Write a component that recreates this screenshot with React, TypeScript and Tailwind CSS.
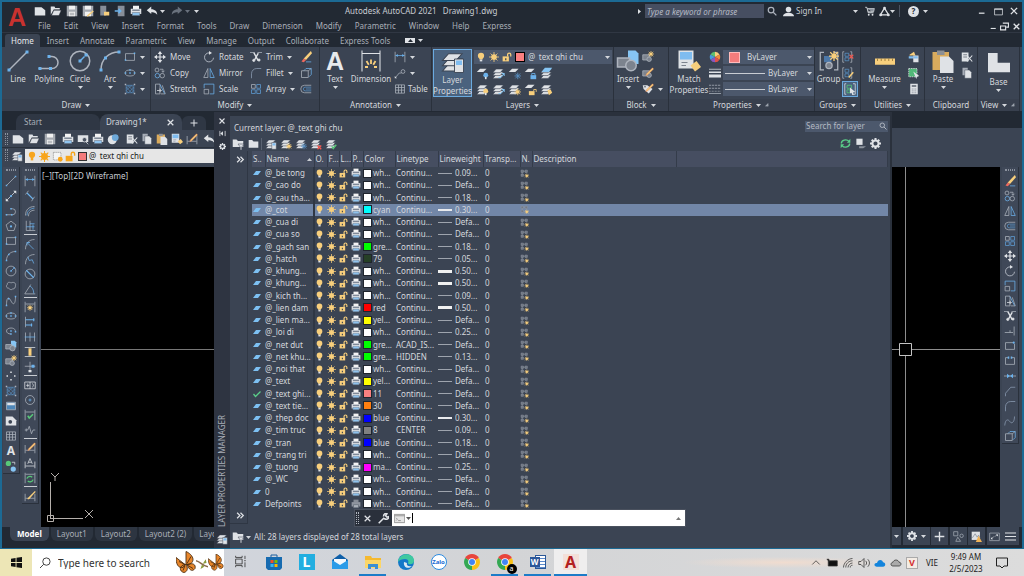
import type { ReactNode } from "react";

const G = "#aeb4be";
const L = "#dfe2e6";
const B = "#6cb2ec";
const Y = "#f8cf7c";

const stack = (
  <g fill={L} stroke="#3b4453" strokeWidth="0.7">
    <path d="M5 9.5h9l-4 4.5H1z" />
    <path d="M5 6h9l-4 4.5H1z" />
    <path d="M5 2.500h9L10 7H1z" />
  </g>
);
const sheet = <path d="M5 2h8L9 6H1z" fill={L} />;
const blockBase = (
  <g fill="#7c838e" stroke={G}>
    <path d="M1 5h9v7H1z" />
    <circle cx="9.500" cy="11" r="3" />
  </g>
);
const spark = (x: number, y: number) => (
  <g transform={`translate(${x} ${y})`}>
    <path d="M0-4v8M-4 0h8M-3-3l6 6M3-3l-6 6" stroke={Y} strokeWidth="1" />
    <circle r="2" fill={Y} />
  </g>
);
const pencil = <path d="M14 1l1.500 1.500-8 8-2.500 1 1-2.500z" fill={Y} stroke="#e07050" strokeWidth="0.5" />;

const icons: Record<string, ReactNode> = {
  line: <><path d="M2 14L14 2" stroke={G} /><path d="M1 13h2v2H1zM13 1h2v2h-2z" fill={B} /></>,
  xline: <><path d="M2 14L14 2" stroke={L} /><path d="M1 11v4h4zM15 5V1h-4z" fill={L} /><circle cx="8" cy="8" r="1.500" fill={B} /></>,
  polyline: <><path d="M1 13h9a4 4 0 000-8H8" stroke={G} /><path d="M1 12h2v2H1zM8 12h2v2H8zM7 4h2v2H7z" fill={B} /></>,
  circle: <><circle cx="8" cy="8" r="6.500" stroke={G} /><path d="M8 8l3-3" stroke={B} /><path d="M7 7h2v2H7zM11 3h2v2h-2z" fill={B} /></>,
  arc: <><path d="M2 14C2 7 7 2 14 2" stroke={G} /><path d="M1 13h2v2H1zM13 1h2v2h-2zM4 5h2v2H4z" fill={B} /></>,
  rect: <><path d="M2 3.500h12v9H2z" stroke={G} /><path d="M1 11h2v2H1zM13 2h2v2h-2z" fill={B} /></>,
  ellipse: <><ellipse cx="8" cy="8" rx="6.500" ry="4" stroke={G} /><path d="M1 7h2v2H1zM13 7h2v2h-2zM7 3h2v2H7zM7 7h2v2H7z" fill={B} /></>,
  ellipseArc: <><path d="M8 12c-8 0-8-8 0-8 5 0 6 3 6 5" stroke={G} /><path d="M7 7h2v2H7zM7 11h2v2H7zM13 8h2v2h-2z" fill={B} /></>,
  hatch: <><path d="M3 3h10v10H3zM3 6l7 7M3 10l3 3M5 3l8 8M9 3l4 4M13 6l-7 7M13 10l-3 3M10 3L3 10M7 3L3 7" stroke="#5a94c8" strokeWidth="0.8" /><path d="M1 1h2v2H1zM13 1h2v2h-2zM1 13h2v2H1zM13 13h2v2h-2z" fill={G} /></>,
  gradient: <><path d="M2 3h12v10H2z" fill="#4d86b8" stroke={G} /><path d="M3 4h10v3H3z" fill={L} /></>,
  polygon: <><path d="M8 1.500L14.500 6.500 12 14H4L1.500 6.500z" stroke={G} /><circle cx="8" cy="8.500" r="1.500" fill={B} /></>,
  revcloud: <path d="M3 6c0-4 4-3 5-2 3-2 7 0 6 3 0 3-1 5-4 5-2 2-4 0-5-1C2 11 1 8 3 6z" stroke={G} />,
  spline: <><path d="M2 14C2 2 5 2 8 8s6 5 6-6" stroke={G} /><path d="M1 13h2v2H1zM13 1h2v2h-2zM4 4h2v2H4z" fill={B} /></>,
  insert: <><path d="M8 1h5l2 2v7H8z" fill="#86c5f4" /><path d="M1 6h8v6H1z" fill="#7c838e" stroke={G} /><circle cx="10" cy="11" r="3.500" fill="#7c838e" stroke={G} /></>,
  makeBlock: <>{blockBase}{spark(12, 4)}</>,
  editBlock: <>{blockBase}{pencil}</>,
  tag: <><path d="M1 3h6l7 5-5 6-7-6z" fill={L} /><circle cx="4" cy="5" r="1" fill="#3b4453" />{pencil}</>,
  point: <path d="M7 2h2v2H7zM2 7h2v2H2zM12 7h2v2h-2zM7 12h2v2H7z" fill={L} />,
  region: <><path d="M1 2h9l5 5v7H1z" fill={L} /><circle cx="7" cy="9" r="2.500" fill="#3b4453" /></>,
  table: <path d="M2 2.500h12v11H2zM2 6h12M2 9.500h12M6 2.500v11M10 2.500v11" stroke={G} />,
  addSel: <><circle cx="4.500" cy="4.500" r="3.500" fill="#58c878" /><circle cx="11" cy="12" r="3.500" fill="#86c5f4" /><path d="M9 3h4v3" stroke={L} /></>,
  move: <><path d="M8 2v12M2 8h12" stroke={L} strokeWidth="1.600" /><path d="M8 0l3 4H5zM8 16l3-4H5zM0 8l4-3v6zM16 8l-4-3v6z" fill={L} /></>,
  copy: <><circle cx="4" cy="4" r="2.600" stroke={G} /><circle cx="4.500" cy="11.500" r="3" stroke={B} /><circle cx="11" cy="11.500" r="3" stroke={G} /><path d="M8 3h4v4M10 5l2 2 2-2" stroke={G} /></>,
  stretch: <><path d="M2 1.500h6v13H2zM11 3l4 11.500H9" stroke={G} /><path d="M8 2l6 12" stroke={B} /><path d="M4 10h5M7 8l3 2-3 2" stroke={L} /></>,
  rotate: <><path d="M14 9A6 6 0 118 2.500" stroke={G} strokeWidth="1.300" /><path d="M8 0l4 2.500L8 5z" fill={L} /></>,
  mirror: <><path d="M6.500 2v12H1z" stroke={G} /><path d="M9.500 2v12H15z" stroke={B} /></>,
  scale: <><path d="M1.500 7V1.500h13v13H9" stroke={B} /><path d="M1.500 8.500h6v6h-6z" stroke={G} /></>,
  trim: <><path d="M5 2l6 11M11 3L6 12" stroke={L} strokeWidth="2" /><path d="M0 2h6M10 2h6" stroke={G} /><circle cx="5" cy="12.500" r="1.500" fill={L} stroke={L} /><circle cx="12" cy="12" r="1.500" fill={L} stroke={L} /></>,
  fillet: <path d="M2 15V9c0-4 3-7 7-7h6" stroke="#8d9db4" />,
  chamfer: <path d="M2 15v-4l7-8h6" stroke="#8d9db4" />,
  blend: <path d="M1 14c1-10 5-8 7-5s6 1 6-7" stroke="#8d9db4" />,
  array: <><path d="M2 2h5v5H2z" stroke={G} /><path d="M9 2h5v5H9zM2 9h5v5H2zM9 9h5v5H9z" stroke="#5f9ed6" /></>,
  erase: <><path d="M14.500 0L16 3 8 12 5 10z" fill={Y} /><path d="M5 10l3 2-3 3-3-1z" fill="#ef6a5e" /><path d="M8 14.500h7" stroke={B} /></>,
  explode: <><path d="M5 5L8 2h7v8l-3 3" stroke={B} /><path d="M2 5h9v9H2zM11 5l4-3" stroke={G} /></>,
  offset: <><path d="M15 3H6a5 5 0 000 10h9" stroke={G} /><path d="M15 5.500H7a2.500 2.500 0 000 5h8M8 8h7" stroke="#5a94c8" /></>,
  extend: <path d="M1 10h11M8 7v3M13.500 2v12" stroke={G} />,
  breakPt: <><path d="M12 3.500H2v9h12V5" stroke={G} /><circle cx="13" cy="3.500" r="1.400" fill={B} /></>,
  brk: <><path d="M6 3.500H2v9h12v-9h-4" stroke={G} /><path d="M5 2h2v3H5zM9 2h2v3H9z" fill={B} /></>,
  join: <><path d="M0 8h16" stroke={G} /><path d="M4 5l4 3-4 3zM12 5L8 8l4 3z" fill={B} /></>,
  dim: <><path d="M1.500 1v14M14.500 1v14" stroke={G} /><path d="M2 6h12" stroke={B} /><path d="M2 6l3-2v4zM14 6l-3-2v4z" fill={B} /></>,
  aligned: <><path d="M2 6l4-5M10 15l4-6" stroke={G} /><path d="M4 4l8 8" stroke={B} strokeWidth="1.500" /></>,
  arcLen: <><path d="M2 14C2 6 7 2 14 2M6 15c0-5 3-8 8-8" stroke={G} /><path d="M4 14c0-6 4-9 10-10" stroke={B} /></>,
  ordinate: <><path d="M3 1v13h12M8 1v13" stroke={G} /><path d="M8 5h6M3 9h11M12 6v7" stroke={B} /></>,
  radius: <><path d="M2 15C2 7 7 2 14 2" stroke={G} /><path d="M4 6l9 9M4 6h4M4 6v4" stroke={B} /></>,
  jogged: <><path d="M2 15C2 7 7 2 14 2" stroke={G} /><path d="M5 5l2 5 4-1 2 5" stroke={B} /></>,
  diameter: <><circle cx="8" cy="8" r="6.500" stroke={G} /><path d="M3 3l10 10" stroke={B} strokeWidth="1.500" /></>,
  angular: <><path d="M1 14.500L9 2M1 14.500h14" stroke={G} /><path d="M8 4c3 2 5 5 5 10" stroke={B} /></>,
  quick: <><path d="M1.500 1v14M14.500 1v14M2 4h12" stroke={G} />{spark(8, 9)}</>,
  baseline: <><path d="M2 1v14" stroke={G} /><path d="M2 5h12M2 12h9M13 3v4M10 10v4" stroke={B} strokeWidth="1.500" /></>,
  cont: <><path d="M2 2v12M8 2v12M14 2v12" stroke={G} /><path d="M1 8h14" stroke={B} /></>,
  space: <><path d="M1 2h14M1 14h14" stroke={L} /><path d="M6 3h4v10H6z" fill={Y} /></>,
  dimBreak: <><path d="M1 7h14M8 1v14" stroke={G} /><path d="M10 5h4v4h-4z" fill={B} /><path d="M6 12h4v3H6z" fill={L} /></>,
  tolerance: <path d="M1 4h14v9H1zM8 4v9M3 8.500h4M5 6v5M11 6c2 1 2 4 0 5" stroke={L} />,
  center: <><circle cx="8" cy="8" r="6" stroke={G} /><path d="M8 6v4M6 8h4" stroke={B} /></>,
  inspect: <><path d="M1.500 1v14M14.500 1v14M2 4h12" stroke={G} /><path d="M5 9l2 3 5-5" stroke="#58c878" strokeWidth="2" /></>,
  jogLin: <path d="M1 8h4l2-5 3 10 2-5h3M3 6v4" stroke={G} />,
  dimEdit: <><path d="M1.500 4v11M14.500 4v11M2 11h12" stroke={G} />{pencil}</>,
  dimText: <><path d="M1.500 6v9M14.500 6v9M2 12h12M5 9l3-7 3 7M6 7h4" stroke={L} /></>,
  update: <><path d="M1.500 1v14M14.500 1v14M2 3h12" stroke={G} /><path d="M4 9a4 3 0 017-2M12 10a4 3 0 01-7 2" stroke="#58c878" strokeWidth="1.600" /></>,
  dimStyle: <><path d="M1.500 5v10M14.500 5v10M2 11h12" stroke={G} /><path d="M15 2L7 11l-2 1z" stroke={Y} strokeWidth="1.500" /></>,
  leader: <><path d="M2 14l5-6h3" stroke={G} /><circle cx="12" cy="6" r="2.500" stroke={G} /><path d="M1 12v3h3z" fill={L} /></>,
  bigDim: <><path d="M2 1v14M14 1v14M2 3h12" stroke={L} strokeWidth="0.700" /><path d="M8 7v3M5 8l1.500 2.500M11 8l-1.500 2.500M4 12h2M10 12h2" stroke={Y} strokeWidth="1.200" /></>,
  newFile: <path d="M1 3h9l5 4v7H1z" fill={L} />,
  open: <><path d="M1 13V2h5l1 2h6v2H5z" fill={L} /><path d="M5 7h10l-3 7H2z" fill={L} stroke="#222933" strokeWidth="0.600" /></>,
  save: <><path d="M1 1h14v14H1z" fill="#a6abb2" /><path d="M4 1h8v5H4zM4 9h8v6H4z" fill="#f1f1f1" /><path d="M5 11h6M5 13h6" stroke="#8b9098" /></>,
  saveAs: <><path d="M1 1h14v14H1z" fill="#a6abb2" /><path d="M4 1h8v5H4zM4 9h8v6H4z" fill="#f1f1f1" /><path d="M15 8l-8 7" stroke={Y} strokeWidth="2" /></>,
  openWeb: <><path d="M3 1h8v13H3z" fill="#878e99" /><path d="M8 9h7v5H8z" fill={Y} /></>,
  saveWeb: <><path d="M5 1h9v14H5z" fill="#878e99" /><path d="M1 8h7M6 5l3 3-3 3" stroke={B} strokeWidth="2" /></>,
  print: <><path d="M4 1h8v5H4z" fill="#f3f3f3" /><path d="M1 5h14v7H1z" fill={L} /><path d="M3 6h10v2H3z" fill="#7f8896" /><path d="M3 10h10v4H3z" fill="#8fc3ee" stroke="#68717e" strokeWidth="0.700" /></>,
  printOff: <><path d="M4 1h8v5H4z" fill="#878d97" /><path d="M1 5h14v7H1z" fill="#9096a0" /><path d="M4 9h8v5H4z" fill="#aab0b9" stroke="#5d6572" /></>,
  preview: <><path d="M1 3h14v9H1z" fill={L} /><circle cx="10" cy="9" r="3" fill="#4b5463" stroke={L} /><path d="M12 12l3 3" stroke={L} /></>,
  globe: <><circle cx="7" cy="9" r="6" fill={L} /><circle cx="11" cy="6" r="4.500" fill="#6da8d8" /></>,
  cut: <><path d="M1 2h9v12H1z" fill={L} /><path d="M3 5h5M3 8h5" stroke="#59616d" /><path d="M8 6l7 8M15 6l-7 8" stroke={L} strokeWidth="1.500" /></>,
  docs: <><path d="M2 1h7v10H2z" fill="#a7adb7" /><path d="M5 4h6l3 3v8H5z" fill={L} stroke="#3b4453" strokeWidth="0.600" /></>,
  paste: <><path d="M1 2h11v12H1z" fill="#d9ab5d" /><path d="M4 1h5v3H4z" fill="#8c8f94" /><path d="M6 5h6l3 3v8H6z" fill={L} /></>,
  match: <><path d="M1 1h10v12H1z" fill={L} /><path d="M2 2h8v5H2z" fill="#7ebcf0" /><path d="M3 9h4M3 11h3" stroke="#7c838e" strokeWidth="0.700" /><path d="M9 11l4-3 3 4-4 3z" fill={Y} /></>,
  undo: <path d="M1 7l6-5v3.500c5 0 8 3 8 7.500-2-3-5-3.500-8-3.500V12z" fill={L} />,
  redo: <path d="M15 7L9 2v3.500c-5 0-8 3-8 7.500 2-3 5-3.500 8-3.500V12z" fill="#69717d" />,
  bulb: <><circle cx="8" cy="6" r="5" fill={Y} /><path d="M5.500 9h5v3h-5z" fill={Y} /><path d="M6 12h4v3H6z" fill={L} /></>,
  sun: <><path d="M8 0v16M0 8h16M2.500 2.500l11 11M13.500 2.500l-11 11" stroke={Y} strokeWidth="1.300" /><circle cx="8" cy="8" r="4.500" fill={Y} /></>,
  lock: <><path d="M1 7h10v8H1z" fill={Y} /><path d="M9 7V4c0-3 5-3 5 0v3" stroke={Y} strokeWidth="2" /><path d="M5 10h2v3H5z" fill="#3b4453" /></>,
  layer: <path d="M6 4h10l-6 8H0z" fill="#7dc0f2" />,
  check: <path d="M1 8l4 5L15 3" stroke="#5bd08a" strokeWidth="2.500" />,
  stack,
  layerProps: <>{stack}<path d="M9 6h6v9H9z" fill={L} stroke="#3b4453" strokeWidth="0.600" /><path d="M10 7h4v3h-4z" fill="#7ebcf0" /></>,
  sheetBulb: <>{sheet}<circle cx="12" cy="10" r="3" fill={B} /><path d="M11 12h2v3h-2z" fill={L} /></>,
  stackArrow: <>{stack}<path d="M8 13h3l4-5M12 8h3v3" stroke="#86c5f4" strokeWidth="1.200" /></>,
  stackSnow: <>{stack}<path d="M12 7v8M8 11h8M9 8l6 6M15 8l-6 6" stroke="#5a94c8" /></>,
  sheetSnow: <>{sheet}<path d="M12 7v8M8 11h8M9 8l6 6M15 8l-6 6" stroke="#5a94c8" /></>,
  sheetLock: <>{sheet}<path d="M8 10h7v5H8z" fill={B} /><path d="M9.500 10V8h4v2" stroke={B} /></>,
  stackBlue: <>{stack}<path d="M6 1h9l-4 5H2z" fill="#86c5f4" /></>,
  stackBulb: <>{stack}<circle cx="12" cy="10" r="3" fill={Y} /><path d="M11 12h2v3h-2z" fill={L} /></>,
  stackSun: <>{stack}{spark(12, 11)}</>,
  sheetUnlock: <>{sheet}<path d="M6 10h7v5H6z" fill={Y} /><path d="M12 10V8h3v3" stroke={Y} /></>,
  stackPen: <>{stack}<path d="M9 9l4-1 2 4-4 3z" fill={Y} /></>,
  stackX: <>{stack}<path d="M10 10l5 5M15 10l-5 5" stroke="#ee5a52" strokeWidth="1.800" /></>,
  stackOk: <>{stack}<path d="M9 11l2 3 4-5" stroke="#58c878" strokeWidth="1.800" /></>,
  folder: <path d="M1 3h5l2 2h7v9H1z" fill={L} />,
  folderFilter: <><path d="M1 2h5l2 2h7v8H1z" fill={L} /><path d="M8 8h8l-3 4v4h-2v-4z" fill={L} stroke="#3b4453" strokeWidth="0.700" /></>,
  vp: <><path d="M2 2h4v4H2zM9 2h4v4H9zM2 9h4v4H2zM4 6v3M6 4h3" fill="#6d7582" stroke="#9298a3" />{spark(12, 12)}</>,
  group: <><path d="M4 1H1v14h3M12 1h3v14h-3" stroke={G} /><path d="M4 4h6v5H4z" fill="#4d78a8" /><circle cx="8" cy="11.500" r="2.500" fill="#7c838e" stroke={G} />{spark(12, 4)}</>,
  ungroup: <><path d="M3 1H1v14h2M11 1h2v14h-2" stroke={G} /><path d="M4 3h5v4H4zM4 9h5v4H4z" stroke="#5a94c8" /><path d="M10 5l5 5M15 5l-5 5" stroke="#ee5a52" strokeWidth="1.500" /></>,
  groupEdit: <><path d="M3 1H1v14h2M11 1h2v14h-2" stroke={G} /><path d="M4 3h5v4H4zM4 9h5v4H4z" stroke="#5a94c8" /><path d="M15 7l-6 7" stroke={Y} strokeWidth="2" /></>,
  groupSel: <><path d="M3 1H1v14h2M12 1h3v14h-3" stroke={L} /><path d="M4 3h6v4H4zM4 9h4v4H4z" stroke="#58c878" /><path d="M8 6l7 6-3 .5 1 3-2 .5-1-3-2 1z" fill={L} /></>,
  measure: <><path d="M0 6h16v5H0z" fill={Y} /><path d="M2 6v2M5 6v2M8 6v2M11 6v2M14 6v2" stroke="#8b6b2c" strokeWidth="0.600" /></>,
  pick: <><path d="M2 5l6-4 2 5H2z" fill={Y} /><path d="M7 6h7v9H7z" fill={L} /><path d="M8 7h5v3H8zM1 7h6v3H1z" fill="#7ebcf0" /></>,
  select: <><path d="M1 2h11v11H1z" fill="#50b878" stroke={L} strokeDasharray="2 1" /><path d="M7 6l8 6-3 1-1 3z" fill={L} /></>,
  calc: <><path d="M3 1h10v14H3z" fill={L} /><path d="M5 3h6v2H5z" fill="#59616d" /><path d="M5 8h6M5 10.500h6M5 13h6" stroke="#7b838f" strokeDasharray="1.500 0.750" /></>,
  base: <path d="M0 0h7v7h9v7H0z" fill={L} />,
  wheel: <>
    <path d="M8 8V1a7 7 0 016 3.500z" fill={Y} /><path d="M8 8l6-3.500a7 7 0 010 7z" fill="#f08a3c" />
    <path d="M8 8l6 3.500A7 7 0 018 15z" fill="#e0504a" /><path d="M8 8v7a7 7 0 01-6-3.500z" fill="#8858c0" />
    <path d="M8 8l-6 3.500a7 7 0 010-7z" fill="#489ae0" /><path d="M8 8L2 4.500A7 7 0 018 1z" fill="#5cc070" />
  </>,
  weights: <><path d="M0 3h16" stroke={L} /><path d="M0 7h16" stroke={L} strokeWidth="2" /><path d="M0 12h16" stroke={L} strokeWidth="4" /></>,
  linetypes: <><path d="M0 3h16M0 7h16" stroke={G} strokeDasharray="3 1" /><path d="M0 11h16" stroke={G} strokeDasharray="1 1" /><path d="M0 14h16" stroke={G} /></>,
  search: <><circle cx="6.500" cy="6.500" r="4.500" stroke={G} strokeWidth="2" /><path d="M10 10l5 5" stroke={G} strokeWidth="2" /></>,
  person: <><circle cx="8" cy="5" r="4" fill={L} /><path d="M0 15c0-7 16-7 16 0z" fill={L} /></>,
  cart: <><path d="M0 2h3l2 9h9M4 4h11l-1 5H5z" stroke={L} fill="#8b929c" /><circle cx="6" cy="14" r="1.500" fill={L} /><circle cx="12" cy="14" r="1.500" fill={L} /></>,
  a360: <><path d="M8 3l6 10H2z" stroke={L} strokeWidth="1.800" /><circle cx="8" cy="3" r="2" fill={L} /><circle cx="2.500" cy="13" r="2" fill={L} /><circle cx="13.500" cy="13" r="2" fill={L} /></>,
  min: <path d="M3 11.500h9" stroke={L} strokeWidth="2" />,
  max: <path d="M1 3h14v11H1zM1 4.500h14" stroke={L} strokeWidth="1.300" />,
  restore: <><path d="M5 2h10v7h-4" stroke={L} strokeWidth="2" /><path d="M1 7h9v7H1z" stroke={L} strokeWidth="2" /></>,
  close: <path d="M3 3l10 10M13 3L3 13" stroke={L} strokeWidth="2.200" />,
  plus: <path d="M8 1v14M1 8h14" stroke={L} strokeWidth="2" />,
  dock: <><path d="M2 2v12M14 2v12" stroke={L} strokeWidth="1.800" /><path d="M3 8l6-5v10z" fill={L} /></>,
  gear: <><circle cx="8" cy="8" r="4.500" stroke={L} strokeWidth="3" /><path d="M8 0v3M8 13v3M0 8h3M13 8h3M2.500 2.500l2 2M11.500 11.500l2 2M13.500 2.500l-2 2M4.500 11.500l-2 2" stroke={L} strokeWidth="3" /></>,
  refresh: <><path d="M2 8a6 5 0 0111-3M14 8a6 5 0 01-11 3" stroke="#5bd08a" strokeWidth="2" /><path d="M15 1v6h-5zM1 15V9h5z" fill="#5bd08a" /></>,
  viewMode: <><path d="M2 1h9v9H2z" fill={L} /><path d="M6 12h10l-4 3H6z" fill="#8b929c" /></>,
  chevrons: <path d="M2 3l5 5-5 5M8 3l5 5-5 5" stroke={L} strokeWidth="2.200" />,
  wrench: <path d="M1 15L9 7M8 5c0-4 3-5 5-4l-2 3 2 2 3-1c0 4-4 5-7 3" stroke={L} strokeWidth="2.200" />,
  prompt: <><path d="M.5 2h15v12H.5z" fill="#e4e4e4" stroke="#777" /><path d="M1 4h14M3 7l2 2-2 2M6 11h4" stroke="#777" /></>,
  shapes: <><path d="M1 1h6v6H1zM7 9l4 6H4z" stroke={G} /><circle cx="12.500" cy="7" r="2.500" stroke={G} /></>,
  picWarn: <><path d="M1 1h12v12H1z" fill={L} /><path d="M2 10l4-6 3 5 2-3 2 4" stroke="#7b8591" /><path d="M11 7l5 9H7z" fill="#f0b357" /></>,
  clean: <><path d="M1 3h14v11H1z" stroke={G} /><path d="M4 11l3-3M12 5L9 8" stroke={L} /><path d="M3 12V9l3 3zM13 5v3l-3-3z" fill={L} /></>,
  menu: <path d="M0 3h16M0 8h16M0 13h16" stroke={L} strokeWidth="1.600" />,
};

function Icon({ name, className = "size-3" }: { name: string; className?: string }) {
  return (
    <svg viewBox="0 0 16 16" fill="none" aria-hidden="true" className={`${className} shrink-0`}>
      {icons[name]}
    </svg>
  );
}

function Caret({ className = "text-[#d5d8dd]" }: { className?: string }) {
  return (
    <svg viewBox="0 0 5 3" aria-hidden="true" className={`h-[3px] w-[5px] shrink-0 ${className}`}>
      <path d="M0 0h5L2.500 3z" fill="currentColor" />
    </svg>
  );
}

function IconButton({ name, className = "size-4", icon }: { name: string; className?: string; icon?: string }) {
  return (
    <button type="button" aria-label={name} className={`flex shrink-0 items-center justify-center ${className}`}>
      <Icon name={name} className={icon} />
    </button>
  );
}

/* ---------- Title bar and menus ---------- */

const menus = ["File", "Edit", "View", "Insert", "Format", "Tools", "Draw", "Dimension", "Modify", "Parametric", "Window", "Help", "Express"];
const ribbonTabs = ["Insert", "Annotate", "Parametric", "View", "Manage", "Output", "Collaborate", "Express Tools"];
const quickAccess = ["newFile", "open", "save", "saveAs", "openWeb", "saveWeb", "print"];

function Header() {
  return (
    <header className="flex bg-[#222933] text-[#c9cdd3]">
      <div className="flex w-[30px] shrink-0 items-center justify-center font-['Liberation_Sans'] text-[25px] leading-none font-bold text-[#c8322f]">A</div>
      <div className="min-w-0 flex-1">
        <div className="flex h-[18px] items-center">
          <div className="flex w-[313px] shrink-0 items-center">
            {quickAccess.map((n) => <IconButton key={n} name={n} />)}
            <IconButton name="undo" />
            <Caret />
            <span className="w-1" />
            <IconButton name="redo" />
            <Caret className="text-[#69717d]" />
            <span className="w-1" />
            <Caret />
          </div>
          <h1 className="flex-1 whitespace-pre">Autodesk AutoCAD 2021   Drawing1.dwg</h1>
          <svg viewBox="0 0 3 5" className="mr-1 h-[5px] w-[3px]"><path d="M0 0v5l3-2.500z" fill={L} /></svg>
          <input aria-label="Type a keyword or phrase" placeholder="Type a keyword or phrase" className="h-[14px] w-[119px] bg-[#464e61] px-[2px] italic placeholder:text-[#b4b9c3]" />
          <div className="flex w-[258px] shrink-0 items-center">
            <IconButton name="search" icon="size-[10px]" />
            <IconButton name="person" icon="size-[11px]" />
            <button type="button" className="w-[57px] text-left">Sign In</button>
            <Caret />
            <span className="w-1" />
            <IconButton name="cart" icon="size-[10px]" />
            <IconButton name="a360" className="h-4 w-3" icon="size-[11px]" />
            <Caret />
            <span className="mx-1 h-3 w-px bg-[#4b5361]" />
            <button type="button" aria-label="Help" className="mx-1 flex size-[11px] items-center justify-center rounded-full bg-[#dfe2e6] font-bold text-[#222933]">?</button>
            <Caret />
            <span className="flex-1" />
            <IconButton name="min" icon="size-[10px]" />
            <IconButton name="max" icon="size-[9px]" />
            <IconButton name="close" icon="size-[10px]" />
          </div>
        </div>
        <nav className="flex h-3 items-center gap-[13px] pl-[6px] text-[#a9aeb7]">
          {menus.map((m) => <a key={m} href="#">{m}</a>)}
          <span className="flex-1" />
          <div className="flex">
            <IconButton name="min" className="h-3 w-[11px]" icon="size-[9px]" />
            <IconButton name="restore" className="h-3 w-[11px]" icon="size-[9px]" />
            <IconButton name="close" className="h-3 w-3" icon="size-[9px]" />
          </div>
        </nav>
      </div>
    </header>
  );
}

function RibbonTabs() {
  return (
    <nav className="flex h-[15px] items-end border-t border-[#303743] bg-[#222933] pl-[3px] text-[#a9aeb7]">
      <a href="#" className="flex h-[13px] items-center rounded-t-[3px] bg-[#3b4453] px-[6px] text-[#e8eaed]">Home</a>
      <div className="ml-[7px] flex items-end gap-[11px]">
        {ribbonTabs.map((t) => <a key={t} href="#" className="flex h-[13px] items-center">{t}</a>)}
        <button type="button" aria-label="Minimize ribbon" className="ml-1 flex h-[13px] items-center gap-[3px]">
          <span className="flex h-[5px] w-[10px] items-center justify-center bg-[#dfe2e6]"><Caret className="rotate-180 text-[#222933]" /></span>
          <Caret />
        </button>
      </div>
    </nav>
  );
}

/* ---------- Ribbon ---------- */

function Panel({ title, width, caret = true, launcher, children }: { title: string; width: string; caret?: boolean; launcher?: boolean; children: ReactNode }) {
  return (
    <section className={`flex shrink-0 flex-col border-r border-[#2a313c] ${width}`}>
      <div className="flex h-[52px] items-start overflow-hidden pt-[2px]">{children}</div>
      <div className="flex h-3 items-center justify-center gap-1 bg-[#38404e]">
        <span>{title}</span>
        {caret && <Caret />}
        {launcher && <Caret className="-rotate-45 text-[#9aa1ab]" />}
      </div>
    </section>
  );
}

function Big({ icon, label, width, size = "size-6", caret, children }: { icon?: string; label: string; width: string; size?: string; caret?: boolean; children?: ReactNode }) {
  return (
    <button type="button" className={`flex h-12 shrink-0 flex-col items-center ${width}`}>
      <span className="flex h-6 items-center justify-center">{icon ? <Icon name={icon} className={size} /> : children}</span>
      <span className="leading-[11px]">{label}</span>
      {caret && <Caret className="mt-[2px] text-[#d5d8dd]" />}
    </button>
  );
}

function Small({ icon, label, caret, gap = "gap-1" }: { icon: string; label?: string; caret?: boolean; gap?: string }) {
  return (
    <button type="button" aria-label={label ?? icon} className={`flex h-4 items-center ${gap}`}>
      <Icon name={icon} />
      {label && <span>{label}</span>}
      {caret && <Caret />}
    </button>
  );
}

function Field({ label, value, children, width }: { label: string; value: string; children: ReactNode; width: string }) {
  return (
    <label className={`flex h-[14px] items-center gap-[3px] bg-[#4c586c] px-[2px] ${width}`}>
      {children}
      <select aria-label={label} className="min-w-0 flex-1 appearance-none leading-none">
        <option>{value}</option>
      </select>
      <Caret />
    </label>
  );
}

function Ribbon() {
  return (
    <div className="flex h-16 overflow-hidden bg-[#3b4453] text-[#d5d8dd]">
      <Panel title="Draw" width="w-[149px]">
        <Big icon="line" label="Line" width="w-8" />
        <Big icon="polyline" label="Polyline" width="w-[30px]" />
        <Big icon="circle" label="Circle" width="w-8" caret />
        <Big icon="arc" label="Arc" width="w-7" caret />
        <div className="flex flex-col">
          <Small icon="rect" caret gap="gap-1" />
          <Small icon="ellipse" caret gap="gap-1" />
          <Small icon="hatch" caret gap="gap-1" />
        </div>
      </Panel>
      <Panel title="Modify" width="w-[169px]">
        <div className="w-[49px] pl-[3px]">
          <Small icon="move" label="Move" /><Small icon="copy" label="Copy" /><Small icon="stretch" label="Stretch" />
        </div>
        <div className="w-[47px] pl-[3px]">
          <Small icon="rotate" label="Rotate" /><Small icon="mirror" label="Mirror" /><Small icon="scale" label="Scale" />
        </div>
        <div className="w-[53px] pl-[3px]">
          <Small icon="trim" label="Trim" caret /><Small icon="fillet" label="Fillet" caret /><Small icon="array" label="Array" caret />
        </div>
        <div><Small icon="erase" /><Small icon="explode" /><Small icon="offset" /></div>
      </Panel>
      <Panel title="Annotation" width="w-[112px]">
        <Big label="Text" width="w-[30px]" caret>
          <span className="font-['Liberation_Sans'] text-[25px] leading-none font-bold text-[#e8eaed]">A</span>
        </Big>
        <Big icon="bigDim" label="Dimension" width="w-[42px]" />
        <div className="pl-[2px]">
          <Small icon="dim" caret gap="gap-1" /><Small icon="leader" caret gap="gap-1" /><Small icon="table" label="Table" gap="gap-[2px]" />
        </div>
      </Panel>
      <Panel title="Layers" width="w-[182px]">
        <button type="button" className="ml-px flex h-12 w-[39px] shrink-0 flex-col items-center border border-[#6aaadf] bg-[#4a627e]">
          <Icon name="layerProps" className="size-6" />
          <span className="leading-[11px]">Layer</span>
          <span className="leading-[11px]">Properties</span>
        </button>
        <div className="pl-[2px]">
          <div className="flex h-4 items-center">
            <Field label="Layer" value="@_text ghi chu" width="w-[138px]">
              <Icon name="bulb" className="size-[10px]" /><Icon name="sun" className="size-[10px]" /><Icon name="lock" className="size-[10px]" />
              <span className="size-[10px] shrink-0 border border-black bg-[#fb8080]" />
            </Field>
          </div>
          <div className="flex h-4 items-center">
            {["sheetBulb", "stackArrow", "sheetSnow", "sheetLock", "stackBlue"].map((n) => <IconButton key={n} name={n} icon="size-[13px]" />)}
          </div>
          <div className="flex h-4 items-center">
            {["stackBulb", "stackArrow", "stackSun", "sheetUnlock", "stackPen"].map((n) => <IconButton key={n} name={n} icon="size-[13px]" />)}
          </div>
        </div>
      </Panel>
      <Panel title="Block" width="w-[55px]">
        <Big icon="insert" label="Insert" width="w-7" caret />
        <div><Small icon="makeBlock" /><Small icon="editBlock" /><Small icon="tag" caret /></div>
      </Panel>
      <Panel title="Properties" width="w-[146px]" launcher>
        <button type="button" className="flex h-12 w-10 shrink-0 flex-col items-center">
          <Icon name="match" className="size-6" />
          <span className="leading-[11px]">Match</span>
          <span className="leading-[11px]">Properties</span>
        </button>
        <div className="flex-1">
          <div className="flex h-4 items-center gap-[2px]">
            <Icon name="wheel" />
            <Field label="Color" value="ByLayer" width="flex-1">
              <span className="mx-1 size-[11px] shrink-0 border border-[#fbb] bg-[#f47c7c]" />
            </Field>
          </div>
          <div className="flex h-4 items-center gap-[2px]">
            <Icon name="weights" />
            <Field label="Lineweight" value="ByLayer" width="flex-1"><span className="h-px w-10 bg-[#c9cdd3]" /></Field>
          </div>
          <div className="flex h-4 items-center gap-[2px]">
            <Icon name="linetypes" />
            <Field label="Linetype" value="ByLayer" width="flex-1"><span className="h-px w-10 bg-[#c9cdd3]" /></Field>
          </div>
        </div>
      </Panel>
      <Panel title="Groups" width="w-[46px]">
        <Big icon="group" label="Group" width="w-[27px]" size="size-5" />
        <div>
          <Small icon="ungroup" /><Small icon="groupEdit" />
          <button type="button" aria-label="Group selection" className="flex size-4 items-center justify-center border border-[#6aaadf] bg-[#4a627e]"><Icon name="groupSel" /></button>
        </div>
      </Panel>
      <Panel title="Utilities" width="w-[64px]">
        <Big icon="measure" label="Measure" width="w-[47px]" size="size-5" caret />
        <div><Small icon="pick" /><Small icon="select" /><Small icon="calc" /></div>
      </Panel>
      <Panel title="Clipboard" width="w-[53px]" caret={false}>
        <Big icon="paste" label="Paste" width="w-9" size="size-6" caret />
        <div><Small icon="cut" /><Small icon="docs" /></div>
      </Panel>
      <Panel title="View" width="w-[42px]" launcher>
        <Big icon="base" label="Base" width="w-[41px] pt-[3px]" size="size-[22px]" caret />
      </Panel>
    </div>
  );
}

/* ---------- Drawing area ---------- */

const drawTools = ["line", "xline", "polyline", "polygon", "rect", "arc", "circle", "revcloud", "spline", "ellipse", "ellipseArc", "insert", "makeBlock", "point", "hatch", "gradient", "region", "table", "A", "addSel"];
const dimTools = [
  ["dim", "aligned", "arcLen", "ordinate"],
  ["radius", "jogged", "diameter", "angular"],
  ["quick", "baseline", "cont", "space", "dimBreak"],
  ["tolerance", "center", "inspect", "jogLin"],
  ["dimEdit", "dimText", "update"],
  ["dimStyle"],
];
const modifyTools = ["erase", "copy", "mirror", "offset", "array", "move", "rotate", "scale", "stretch", "trim", "extend", "breakPt", "brk", "join", "chamfer", "fillet", "blend", "explode"];

function Grip() {
  return <span className="my-[2px] h-[2px] w-[10px] border-y border-dotted border-[#8a919d]" />;
}

function ToolColumn({ groups }: { groups: string[][] }) {
  return (
    <div className="flex w-[17px] flex-col items-center self-start border-r border-b border-[#2a313c] bg-[#3f4858]">
      <Grip />
      {groups.map((g, i) => (
        <div key={i} className="flex flex-col items-center">
          {i > 0 && <span className="my-px h-px w-[13px] bg-[#c9cdd3]" />}
          {g.map((n) => n === "A"
            ? <button key={n} type="button" className="flex h-[15px] items-center text-xs font-bold text-[#dfe2e6]">A</button>
            : <IconButton key={n} name={n} className="h-[15px] w-4" />)}
        </div>
      ))}
    </div>
  );
}

function LeftPane() {
  return (
    <div className="flex w-[212px] shrink-0 flex-col overflow-hidden bg-[#222933]">
      <div className="flex h-[18px] shrink-0 items-end pl-[14px] text-[#a9aeb7]">
        <a href="#" className="flex h-4 w-[84px] items-center rounded-t-lg bg-[#2f3744] pl-2">Start</a>
        <div className="flex h-4 w-[82px] items-center justify-between rounded-t-lg bg-[#3b4453] px-[6px] text-[#d5d8dd]">
          <a href="#">Drawing1*</a>
          <IconButton name="close" className="size-3" icon="size-[9px]" />
        </div>
        <button type="button" aria-label="New tab" className="flex h-[14px] w-6 items-center justify-center rounded-t-md bg-[#2f3744]"><Icon name="plus" className="size-2" /></button>
      </div>
      <div className="flex h-[17px] shrink-0 items-center bg-[#3b4453] pl-[3px]">
        <span className="h-3 w-[3px] shrink-0 border-x border-dotted border-[#8a919d]" />
        <div className="ml-[2px] flex">{["newFile", "open", "save"].map((n) => <IconButton key={n} name={n} />)}</div>
        <span className="mx-px h-3 w-px bg-[#222933]" />
        {["print", "preview", "print", "globe"].map((n, i) => <IconButton key={i} name={n} className="h-4 w-[15px]" />)}
        <span className="mx-[2px] h-3 w-px bg-[#222933]" />
        {["cut", "docs", "paste", "match", "dimEdit"].map((n) => <IconButton key={n} name={n} className="h-4 w-[15px]" />)}
        <span className="mx-px h-3 w-px bg-[#222933]" />
        <IconButton name="undo" className="h-4 w-[15px]" />
      </div>
      <div className="flex h-5 shrink-0 items-start border-t border-[#2a313c] bg-[#3b4453] pt-px pl-[3px]">
        <span className="h-3 w-[3px] shrink-0 border-x border-dotted border-[#8a919d]" />
        <IconButton name="layerProps" className="h-[14px] w-[17px]" />
        <label className="flex h-[14px] flex-1 items-center gap-[2px] bg-[#e6e6e6] pl-[2px] text-[#222]">
          <svg viewBox="0 0 16 16" className="size-[10px]"><circle cx="8" cy="6" r="5" fill="#f7a51c" /><path d="M6 10h4v5H6z" fill="#f7a51c" /></svg>
          <svg viewBox="0 0 16 16" className="size-[11px]"><path d="M8 0v16M0 8h16M2.500 2.500l11 11M13.500 2.500l-11 11" stroke="#f7a51c" strokeWidth="1.500" /><circle cx="8" cy="8" r="5" fill="#f7a51c" /></svg>
          <svg viewBox="0 0 16 16" className="size-[11px]"><path d="M2 2h11v11H2z" fill="#f4f4f4" stroke="#8a8a8a" strokeDasharray="2 1" /><circle cx="12" cy="12" r="3.500" fill="#f7a51c" /></svg>
          <svg viewBox="0 0 16 16" className="size-[11px]" fill="none"><path d="M1 7h10v8H1z" fill="#f7a51c" /><path d="M9 7V4c0-3 5-3 5 0v3" stroke="#f7a51c" strokeWidth="2" /></svg>
          <span className="size-[9px] border border-[#333] bg-[#f47c7c]" />
          <select aria-label="Current layer" className="flex-1 appearance-none leading-none"><option>@_text ghi chu</option></select>
        </label>
      </div>
      <div className="flex min-h-0 flex-1 gap-[2px] bg-[#3b4453] pl-px">
        <ToolColumn groups={[drawTools]} />
        <ToolColumn groups={dimTools} />
        <div className="flex flex-1 flex-col bg-black text-[#c9cdd3]">
          <p className="pt-[3px] pl-px">[−][Top][2D Wireframe]</p>
          <div className="h-[168px] border-b border-[#777]" />
          <svg viewBox="0 0 50 50" fill="none" aria-hidden="true" className="mt-auto mb-[5px] ml-[5px] size-[50px]">
            <path d="M4.500 10v33M7 46.500h30M1.500 43.500h6v6h-6zM4.500 46.500V43M4 46.500h3M5 1l4 4 4-4M9 5v4M39 38l8 8M47 38l-8 8" stroke="#b5b0ac" />
          </svg>
        </div>
      </div>
      <div className="flex h-[21px] shrink-0 items-start gap-[2px] pl-2 whitespace-nowrap text-[#a9aeb7]">
        <a href="#" className="flex h-[14px] items-center rounded-b-md bg-[#3b4453] px-[7px] font-bold text-white">Model</a>
        {["Layout1", "Layout2", "Layout2 (2)"].map((t) => (
          <a key={t} href="#" className="flex h-[14px] items-center rounded-b-md bg-[#2d3541] px-[6px]">{t}</a>
        ))}
        <a href="#" className="flex h-[14px] flex-1 items-center rounded-bl-md bg-[#2d3541] pl-[5px]">Layo</a>
      </div>
    </div>
  );
}

function RightPane() {
  return (
    <div className="flex w-[130px] shrink-0 flex-col bg-[#222933]">
      <div className="h-4" />
      <div className="h-[39px] bg-[#3b4453]" />
      <div className="flex min-h-0 flex-1 justify-between bg-[#3b4453] pr-[3px]">
        <svg aria-hidden="true" fill="none" className="h-full w-[108px] bg-black" stroke="#8d8d8d">
          <path d="M13.500 0V175M13.500 188V400M0 182.500H7M20 182.500H108" />
          <path d="M7.500 176.500h12v12h-12z" stroke="#c4c4c4" />
        </svg>
        <ToolColumn groups={[modifyTools]} />
      </div>
      <div className="flex h-[21px] shrink-0 items-start justify-between pr-[3px]">
        <button type="button" aria-label="Workspaces" className="flex h-[18px] w-[9px] items-center justify-center bg-[#3b4453]"><Caret /></button>
        <button type="button" aria-label="Settings" className="flex h-[18px] w-[27px] items-center justify-evenly bg-[#3b4453]"><Icon name="gear" className="size-[10px]" /><Caret /></button>
        {["plus", "shapes", "picWarn"].map((n) => <IconButton key={n} name={n} className="h-[18px] w-[17px] bg-[#3b4453]" icon="size-[11px]" />)}
        <div className="flex bg-[#3b4453]">
          <IconButton name="clean" className="h-[18px] w-4" icon="size-[11px]" />
          <IconButton name="menu" className="h-[18px] w-4" icon="size-[11px]" />
        </div>
      </div>
    </div>
  );
}

/* ---------- Layer properties manager ---------- */

type Layer = [name: string, swatch: string, color: string, linetype: string, weight: string, thickness: string];

const W = "bg-white";
const THIN = "h-px bg-[#9ea4ad]";
const MID = "h-[2px] bg-[#e8eaed]";
const THICK = "h-[3px] bg-[#f1f1f1]";

const layers: Layer[] = [
  ["@_be tong", W, "wh...", "Continu...", "0.09...", THIN],
  ["@_cao do", W, "wh...", "Continu...", "Defa...", THIN],
  ["@_cau tha...", W, "wh...", "Continu...", "0.18...", THIN],
  ["@_cot", "bg-[#00ffff]", "cyan", "Continu...", "0.30...", MID],
  ["@_cua di", W, "wh...", "Continu...", "Defa...", THIN],
  ["@_cua so", W, "wh...", "Continu...", "Defa...", THIN],
  ["@_gach san", "bg-[#00ff00]", "gre...", "Continu...", "0.18...", THIN],
  ["@_hatch", "bg-[#264026]", "79", "Continu...", "0.05...", THIN],
  ["@_khung...", W, "wh...", "Continu...", "0.50...", THICK],
  ["@_khung...", W, "wh...", "Continu...", "0.50...", THICK],
  ["@_kich th...", W, "wh...", "Continu...", "0.09...", THIN],
  ["@_lien dam", "bg-[#ff0000]", "red", "Continu...", "0.50...", THICK],
  ["@_lien ma...", "bg-[#ffff00]", "yel...", "Continu...", "Defa...", THIN],
  ["@_loi di", W, "wh...", "Continu...", "0.25...", THIN],
  ["@_net dut", "bg-[#00ff00]", "gre...", "ACAD_IS...", "Defa...", THIN],
  ["@_net khu...", "bg-[#00ff00]", "gre...", "HIDDEN", "0.13...", THIN],
  ["@_noi that", W, "wh...", "Continu...", "Defa...", THIN],
  ["@_text", "bg-[#ffff00]", "yel...", "Continu...", "Defa...", THIN],
  ["@_text ghi...", "bg-[#f98080]", "11", "Continu...", "Defa...", THIN],
  ["@_text tie...", "bg-[#ff7f10]", "30", "Continu...", "Defa...", THIN],
  ["@_thep doc", "bg-[#0000ff]", "blue", "Continu...", "0.30...", MID],
  ["@_tim truc", "bg-[#808080]", "8", "CENTER", "0.09...", THIN],
  ["@_tran", "bg-[#0000ff]", "blue", "Continu...", "0.18...", THIN],
  ["@_trang tri", W, "wh...", "Continu...", "Defa...", THIN],
  ["@_tuong", "bg-[#ff00ff]", "ma...", "Continu...", "0.25...", THIN],
  ["@_WC", W, "wh...", "Continu...", "Defa...", THIN],
  ["0", W, "wh...", "Continu...", "Defa...", THIN],
  ["Defpoints", W, "wh...", "Continu...", "Defa...", THIN],
];

const headers = ["S..", "Name", "O.", "F...", "L...", "P...", "Color", "Linetype", "Lineweight", "Transp...", "N.", "Description", ""];
const columns = ["w-[13px]", "w-[49px]", "w-[13px]", "w-[12px]", "w-[12px]", "w-[12px]", "w-[32px]", "w-[43px]", "w-[45px]", "w-[37px]", "w-[12px]", "w-[144px]", ""];

function LayerTable() {
  return (
    <table className="h-[359px] w-full table-fixed border-collapse text-left whitespace-nowrap text-[#d5d8dd]">
      <colgroup>{columns.map((c, i) => <col key={i} className={c} />)}</colgroup>
      <thead>
        <tr className="h-4 bg-[#464e61]">
          {headers.map((h, i) => (
            <th key={i} className="overflow-hidden border-r border-[#343c4a] p-0 pl-px font-normal">
              <span className="flex items-center justify-between">{h}{h === "Name" && <Caret className="mr-[2px] rotate-180 text-[#c9cdd3]" />}</span>
            </th>
          ))}
        </tr>
      </thead>
      <tbody>
        {layers.map(([name, swatch, color, linetype, weight, thickness], i) => (
          <tr key={i} className={name === "@_cot" ? "bg-[#7287a8]" : ""}>
            <td className="p-0 pl-px"><Icon name={name === "@_text ghi..." ? "check" : "layer"} className="size-2" /></td>
            <td className="overflow-hidden border-r-2 border-[#2f3744] p-0">{name}</td>
            <td className="p-0"><Icon name="bulb" className="size-[9px]" /></td>
            <td className="p-0"><Icon name="sun" className="size-[9px]" /></td>
            <td className="p-0"><Icon name="lock" className="size-[9px]" /></td>
            <td className="p-0"><Icon name={name === "Defpoints" ? "printOff" : "print"} className="size-[10px]" /></td>
            <td className="p-0">
              <span className="flex items-center gap-px"><i className={`size-[9px] shrink-0 border border-[#20252d] ${swatch}`} />{color}</span>
            </td>
            <td className="p-0 pl-px">{linetype}</td>
            <td className="p-0"><span className="flex items-center gap-[3px]"><i className={`w-[14px] shrink-0 ${thickness}`} />{weight}</span></td>
            <td className="p-0 pl-[2px]">0</td>
            <td className="p-0"><Icon name="vp" className="size-[9px]" /></td>
            <td className="p-0" />
            <td className="p-0" />
          </tr>
        ))}
      </tbody>
    </table>
  );
}

function LayerManager() {
  return (
    <section className="flex min-w-0 flex-1 bg-[#2e3441] text-[#d5d8dd]">
      <div className="flex w-4 shrink-0 flex-col items-center pt-[2px]">
        <IconButton name="close" className="h-[13px] w-4" icon="size-2" />
        <IconButton name="dock" className="h-[13px] w-4" icon="size-[7px]" />
        <IconButton name="gear" className="h-[13px] w-4" icon="size-[7px]" />
        <span className="mt-auto rotate-180 text-[#a9aeb7] [writing-mode:vertical-rl]">LAYER PROPERTIES MANAGER</span>
        <IconButton name="layerProps" className="mt-1 mb-px size-4" />
      </div>
      <div className="flex min-w-0 flex-1 flex-col border-t-4 border-r-2 border-[#2a313c] bg-[#3b4453]">
        <div className="flex h-5 shrink-0 items-center justify-between pr-[2px] pl-1">
          <p className="pt-[3px]">Current layer: @_text ghi chu</p>
          <label className="flex h-[11px] w-[83px] items-center bg-[#4c586c]">
            <input aria-label="Search for layer" placeholder="Search for layer" className="min-w-0 flex-1 pl-px placeholder:text-[#b4b9c3]" />
            <Icon name="search" className="mr-px size-2" />
          </label>
        </div>
        <div className="flex h-[15px] shrink-0 items-center pr-[7px]">
          <IconButton name="folderFilter" /><IconButton name="folder" className="size-[14px]" icon="size-[11px]" />
          <span className="mx-px h-3 w-px bg-[#5a6372]" />
          {["layerProps", "stackSun", "stackSnow", "stackX", "stackOk"].map((n) => <IconButton key={n} name={n} className="h-[15px] w-[15px]" />)}
          <span className="flex-1" />
          {["refresh", "viewMode", "gear"].map((n) => <IconButton key={n} name={n} className="h-[15px] w-[15px]" icon="size-[11px]" />)}
        </div>
        <div className="flex min-h-0 flex-1 pr-[2px]">
          <div className="mr-[4px] flex w-[18px] shrink-0 flex-col items-center justify-between border-r border-b border-[#2f3744] pl-1">
            <IconButton name="chevrons" icon="size-[9px]" />
            <IconButton name="chevrons" icon="size-[9px]" />
          </div>
          <div className="min-w-0 flex-1"><LayerTable /></div>
        </div>
        <footer className="flex h-6 shrink-0 items-center gap-[2px] pt-[2px] pl-[2px]">
          <Icon name="folderFilter" /><Caret />
          <p className="pl-px">All: 28 layers displayed of 28 total layers</p>
        </footer>
      </div>
    </section>
  );
}

/* Floats over the drawing and the palette */
function CommandLine() {
  return (
    <div className="absolute bottom-[21px] left-[352px] flex h-[18px] w-[332px] items-center border border-[#4a515e] bg-[#2a303b]">
      <span className="ml-px h-3 w-[3px] border-x border-dotted border-[#aeb4be]" />
      <IconButton name="close" icon="size-[9px]" />
      <IconButton name="wrench" className="mr-px size-4" icon="size-[11px]" />
      <label className="flex h-full flex-1 items-center bg-white px-[2px]">
        <Icon name="prompt" className="size-[11px]" />
        <Caret className="mx-px text-[#555]" />
        <span className="h-[10px] w-px bg-black" />
        <input aria-label="Command" className="min-w-0 flex-1 text-black" />
        <Caret className="mr-[2px] rotate-180 text-[#777]" />
      </label>
    </div>
  );
}

/* ---------- Windows taskbar ---------- */

function Chrome() {
  return (
    <svg viewBox="0 0 16 16" className="size-4">
      <path d="M8 8L1.100 4A8 8 0 0114.900 4z" fill="#e8453c" />
      <path d="M8 8l6.900-4A8 8 0 018 16z" fill="#fbc116" />
      <path d="M8 8v8A8 8 0 011.100 4z" fill="#34a853" />
      <circle cx="8" cy="8" r="3.800" fill="#fff" /><circle cx="8" cy="8" r="3" fill="#4285f4" />
    </svg>
  );
}

function Butterfly({ className }: { className: string }) {
  return (
    <svg viewBox="0 0 20 22" className={className} aria-hidden="true">
      <g fill="#e8862a" stroke="#4a2c12" strokeWidth="0.9">
        <path d="M9 13L0 6c0 6 2 11 7 10zM10 13L10 0c7 3 10 10 3 13zM9 13c-6 1-6 7-1 8 4-1 4-5 2-8zM11 13c6-2 9 0 8 4-3 4-6 1-8-4z" />
        <path d="M9 13L3 10M11 12l4-7M9 14l-2 5M12 14l5 3" />
      </g>
    </svg>
  );
}

const taskApps: { name: string; open?: boolean; icon: ReactNode }[] = [
  { name: "Task view", icon: <svg viewBox="0 0 16 16" fill="none" className="size-[13px]" stroke="#333"><path d="M2 5h8v6H2zM2 1v2h8V1M2 15v-2h8v2M13.500 1v4M13.500 9v6M12.500 7h2" /></svg> },
  { name: "Store", icon: <svg viewBox="0 0 16 16" className="size-4"><path d="M5 4V1h6v3" fill="none" stroke="#1d5f9e" /><path d="M0 3h16v11l-2 2H2l-2-2z" fill="#176bb0" /><path d="M4.500 6h3v3h-3z" fill="#f25022" /><path d="M8.500 6h3v3h-3z" fill="#7fba00" /><path d="M4.500 10h3v3h-3z" fill="#33b8f5" /><path d="M8.500 10h3v3h-3z" fill="#ffb900" /></svg> },
  { name: "L app", icon: <span className="flex size-4 items-center justify-center bg-[#22aee0] text-sm font-bold text-white">L</span> },
  { name: "Mail", icon: <svg viewBox="0 0 16 16" className="size-4"><path d="M0 6l8-6 8 6v9H0z" fill="#0f5fa8" /><path d="M2 5h12v6H2z" fill="#f4f8fc" /><path d="M0 6l8 5 8-5v9H0z" fill="#2a9be8" /></svg> },
  { name: "File Explorer", open: true, icon: <svg viewBox="0 0 16 16" className="size-4"><path d="M0 2h6l1 2h9v10H0z" fill="#f5b92f" /><path d="M0 6h16v8H0z" fill="#fcd667" /><path d="M3 10h10v5h-3v-2H6v2H3z" fill="#3c8fd4" /></svg> },
  { name: "Edge", icon: <svg viewBox="0 0 16 16" className="size-4"><circle cx="8" cy="8" r="8" fill="#1478c8" /><path d="M0 8C1-2 16-2 16 7c0 4-6 4-6 2 1-2 0-4-3-4S1 6 0 8z" fill="#3fc9a0" /><path d="M6 8c-1 5 4 8 8 4-4 1-6-1-5-3z" fill="#dbe9f3" /></svg> },
  { name: "Zalo", icon: <span className="flex size-4 items-center justify-center rounded-full border border-[#2b8ae0] bg-white text-[6px] font-bold text-[#1767d2]">Zalo</span> },
  { name: "Chrome", icon: <Chrome /> },
  { name: "Chrome profile", open: true, icon: <span className="relative"><Chrome /><i className="absolute -right-1 -bottom-1 flex size-[10px] items-center justify-center rounded-full bg-black text-[7px] text-white not-italic">a</i></span> },
  { name: "Word", open: true, icon: <span className="relative flex h-[14px] w-4 justify-end"><i className="h-full w-[11px] border border-[#2b5797] bg-[repeating-linear-gradient(#fff_0_2px,#5c8acb_2px_3px)]" /><i className="absolute top-[2px] left-0 flex h-[10px] w-[10px] items-center justify-center bg-[#2b579a] font-bold text-white not-italic">W</i></span> },
];

function Taskbar() {
  return (
    <footer className="flex h-[27px] shrink-0 items-stretch bg-linear-to-r from-[#cfd5e0] via-[#d3d4d6] to-[#dcdcdc] text-[#222]">
      <button type="button" aria-label="Start" className="flex w-8 items-center justify-center bg-[#ede6b6]">
        <svg viewBox="0 0 12 12" className="size-[11px]"><path d="M0 2l5-1v4.500H0zM6 .8L12 0v5.500H6zM0 6.500h5V11l-5-1zM6 6.500h6V12l-6-.8z" fill="#111" /></svg>
      </button>
      <label className="flex w-48 items-center bg-white pl-2">
        <svg viewBox="0 0 12 12" fill="none" stroke="#333" className="size-[11px] shrink-0"><circle cx="7" cy="5" r="4" /><path d="M4 8l-4 4" /></svg>
        <input aria-label="Type here to search" placeholder="Type here to search" className="min-w-0 flex-1 pl-[7px] text-[10px] placeholder:text-[#333]" />
        <Butterfly className="h-[23px] w-5" />
        <svg viewBox="0 0 16 20" className="h-5 w-3" fill="none"><path d="M0 7c6 1 8 7 16 8" stroke="#8a6a4c" strokeWidth="2" /><path d="M9 11l4-6 1 5zM8 12l-2 6 5-3z" fill="#8a9a3a" /></svg>
        <Butterfly className="h-[17px] w-4" />
      </label>
      {taskApps.map((a) => (
        <button key={a.name} type="button" aria-label={a.name} className="flex w-[33px] items-center justify-center">
          <span className={`flex h-full w-[27px] items-center justify-center border-b-2 ${a.open ? "border-[#1c7cc8]" : "border-transparent"}`}>{a.icon}</span>
        </button>
      ))}
      <button type="button" aria-label="AutoCAD" className="flex w-[33px] items-center justify-center border-b-2 border-[#1c7cc8] bg-[#efeeee]">
        <span className="flex size-4 items-center justify-center bg-[#f3dfd8] text-base leading-none font-bold text-[#b3201f]">A</span>
      </button>
      <div className="flex flex-1 items-center justify-end bg-[radial-gradient(ellipse_at_45%_50%,#f0dccf,transparent_30%)]">
        {[
          <path key="up" d="M3 10l5-5 5 5" />,
          <path key="bat" d="M3 5h12v7H3zM1 3h3v4" fill="#111" />,
          <path key="wifi" d="M2 14C2 8 8 2 14 2M5 14c0-5 4-9 9-9M8 14c0-3 3-6 6-6M11 14c0-2 1-3 3-3" />,
          <path key="snd" d="M1 6h3l4-4v12l-4-4H1zM10 5c2 2 2 4 0 6M13 3c3 3 3 7 0 10" />,
          <path key="od" d="M4 13c-5 0-4-6 0-5 1-5 7-5 8-1 4 0 4 6 0 6z" fill="#1384dc" stroke="none" />,
          <path key="cl" d="M4 12c-4 0-3-5 0-5 1-4 7-4 8 0 4 0 3 5 0 5z" fill="#aaa" />,
        ].map((p, i) => (
          <button key={i} type="button" aria-label={`Tray ${i + 1}`} className="flex w-4 justify-center">
            <svg viewBox="0 0 16 16" fill="none" stroke="#333" className="size-3">{p}</svg>
          </button>
        ))}
        <span className="mx-[2px] flex size-3 items-center justify-center border border-[#aaa] bg-[#f4ece4] text-[9px] leading-none font-bold text-[#d32f2f]">V</span>
        <span className="w-6 text-center">VIE</span>
        <p className="w-11 text-center leading-[12px]">9:49 AM<br />2/5/2023</p>
        <button type="button" aria-label="Notifications" className="mx-2 mr-4">
          <svg viewBox="0 0 12 12" fill="none" stroke="#222" className="size-3"><path d="M.5 1h11v8H8l-2 2-2-2H.5z" /></svg>
        </button>
      </div>
    </footer>
  );
}

export default function App() {
  return (
    <div className="flex h-screen min-w-0 flex-col overflow-hidden font-['Noto_Sans','Open_Sans',sans-serif] text-[8px] leading-[12px]">
      <div className="flex min-h-0 flex-1 flex-col border-x-2 border-t-2 border-b border-[#1c6a94] bg-[#222933]">
        <Header />
        <RibbonTabs />
        <Ribbon />
        <main className="relative flex min-h-0 flex-1 pt-px">
          <LeftPane />
          <LayerManager />
          <RightPane />
          <CommandLine />
        </main>
      </div>
      <Taskbar />
    </div>
  );
}
